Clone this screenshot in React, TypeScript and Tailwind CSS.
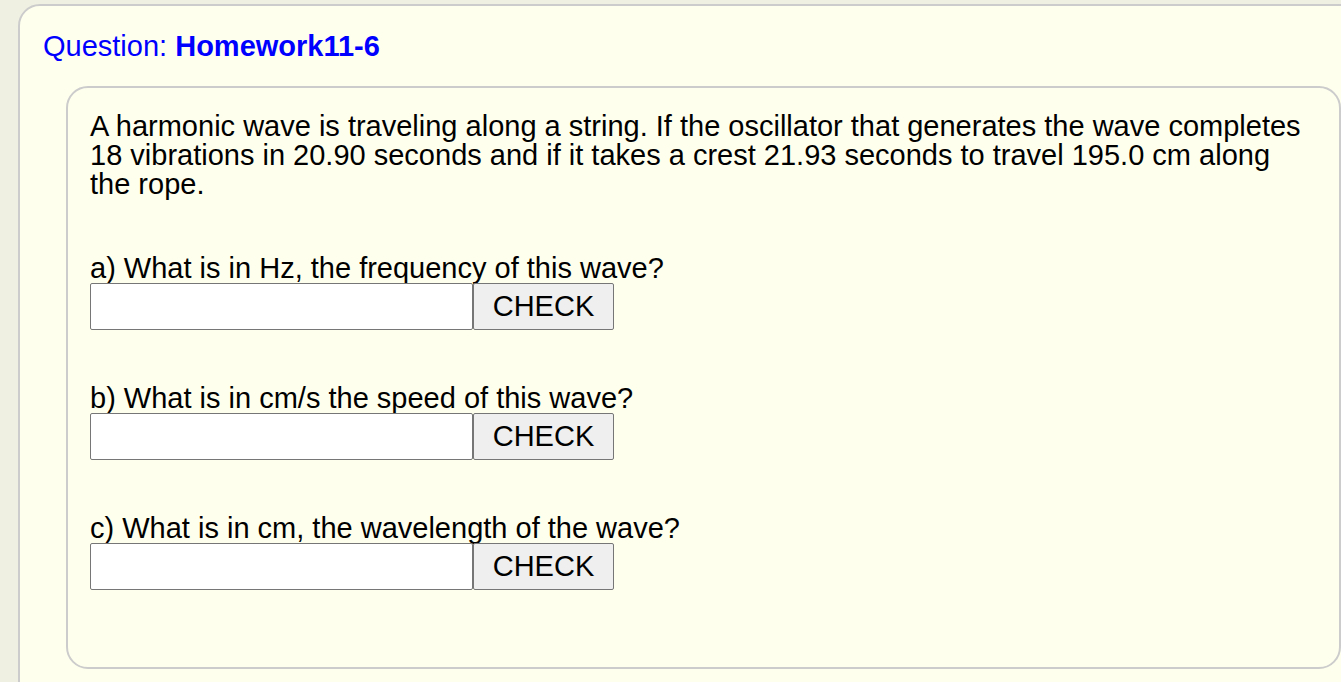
import React from "react";

const parts = [
  { label: "a) What is in Hz, the frequency of this wave?" },
  { label: "b) What is in cm/s the speed of this wave?" },
  { label: "c) What is in cm, the wavelength of the wave?" },
];

export default function App() {
  return (
    <div
      className="h-[682px] w-full overflow-hidden bg-[#f0f0e2] pt-[4px] pl-[18px]"
      style={{ fontFamily: '"Liberation Sans", Arial, sans-serif' }}
    >
      <div className="w-[1400px] h-[720px] rounded-[22px] border-2 border-[#cccccc] bg-[#ffffee] pl-[46px] pt-[26px]">
        <h1 className="-ml-[23px] text-[29px] leading-[29px] text-[#0000ff]">
          Question: <span className="font-bold">Homework11-6</span>
        </h1>

        <div className="mt-[25px] w-[1275px] rounded-[22px] border-2 border-[#cccccc] pl-[22px] pr-[10px] pt-[24px] pb-[77px] text-[29px] leading-[29px] text-black">
          <p>
            A harmonic wave is traveling along a string. If the oscillator that generates the wave completes
            <br />
            18 vibrations in 20.90 seconds and if it takes a crest 21.93 seconds to travel 195.0 cm along
            <br />
            the rope.
          </p>

          {parts.map((p, i) => (
            <div key={i} className={i === 0 ? "mt-[55px]" : "mt-[54px]"}>
              <p>{p.label}</p>
              <div className="flex">
                <input
                  type="text"
                  className="w-[383px] h-[47px] border border-[#767676] bg-white rounded-[2px] outline-none"
                />
                <button className="w-[141px] h-[47px] border border-[#767676] bg-[#efefef] rounded-[2px] text-[29px] leading-[29px] text-black">
                  CHECK
                </button>
              </div>
            </div>
          ))}
        </div>
      </div>
    </div>
  );
}
